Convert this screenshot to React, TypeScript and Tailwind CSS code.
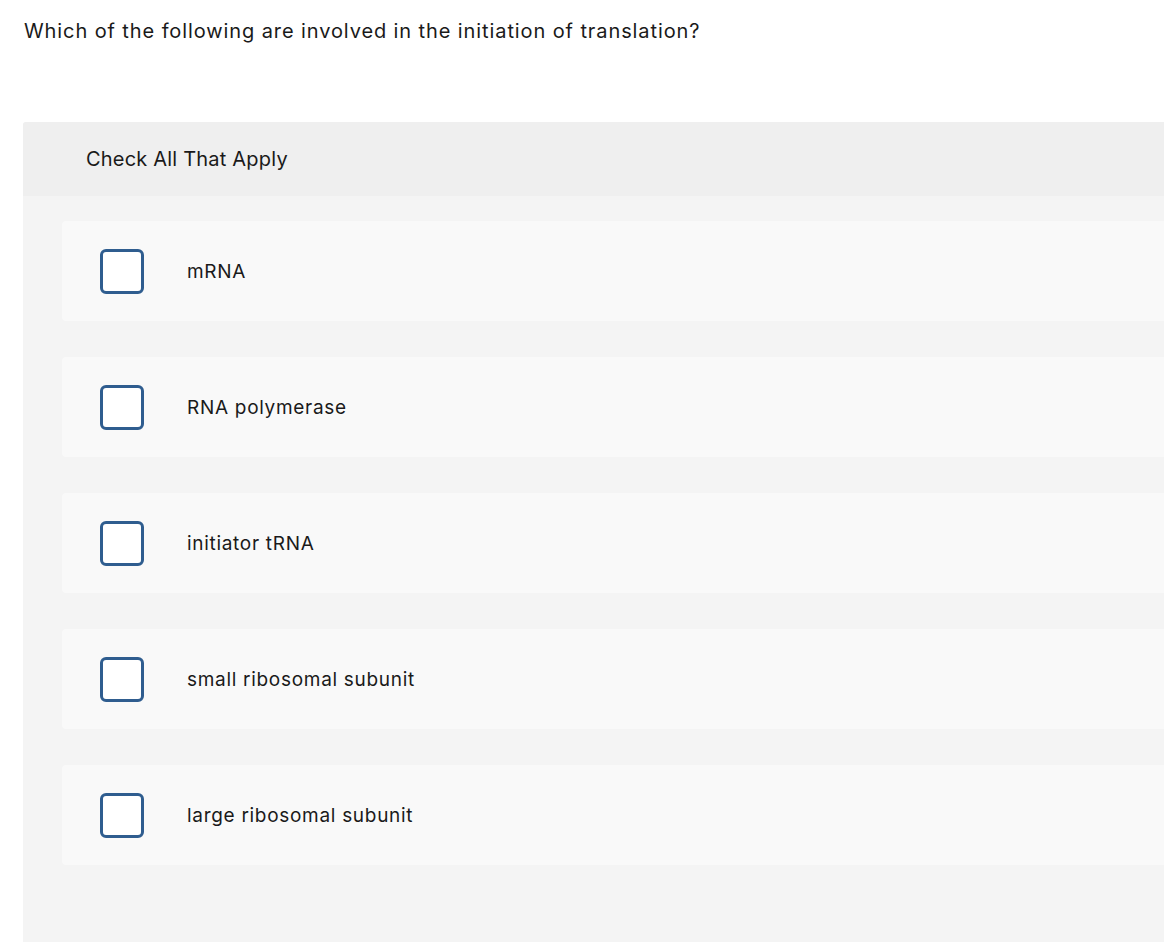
import React from "react";

const options = [
  "mRNA",
  "RNA polymerase",
  "initiator tRNA",
  "small ribosomal subunit",
  "large ribosomal subunit",
];

export default function App() {
  return (
    <div
      className="w-full h-[942px] overflow-hidden bg-white text-[#1a1a1a]"
      style={{ fontFamily: "Inter, 'Open Sans', sans-serif" }}
    >
      <div className="pl-[24px] pt-[18px] h-[122px] text-[20px] leading-[26px] tracking-[0.9px]">
        Which of the following are involved in the initiation of translation?
      </div>
      <div className="ml-[23px] w-[1200px] h-[820px] bg-[#f4f4f4] rounded-tl-[3px]">
        <div className="h-[74px] bg-[#efefef] rounded-tl-[3px] flex items-center pl-[63px] text-[20px] tracking-[0.2px]">
          Check All That Apply
        </div>
        <div className="pl-[39px] pt-[25px] flex flex-col gap-[36px]">
          {options.map((o) => (
            <div
              key={o}
              className="h-[100px] bg-[#f9f9f9] rounded-[4px] flex items-center pl-[38px]"
            >
              <div className="w-[44px] h-[45px] rounded-[6px] border-[3px] border-[#2f5d8f] bg-white shrink-0" />
              <span className="ml-[43px] text-[19px] tracking-[0.7px] translate-y-[1px]">{o}</span>
            </div>
          ))}
        </div>
      </div>
    </div>
  );
}
